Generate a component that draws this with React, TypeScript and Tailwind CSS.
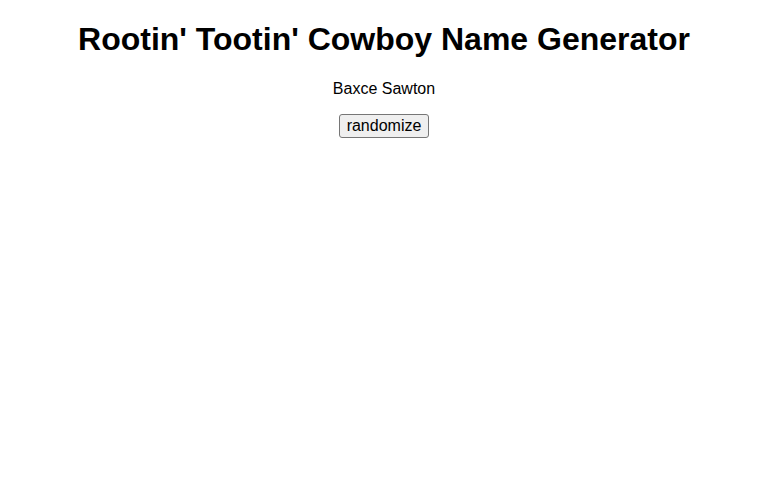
import { useState } from "react";

const FIRST = ["Baxce", "Jebediah", "Clem", "Wyatt", "Hoss", "Dusty"];
const LAST = ["Sawton", "McGraw", "Buckley", "Tumbleweed", "Colt", "Barlow"];

export default function App() {
  const [name, setName] = useState("Baxce Sawton");

  const randomize = () => {
    const f = FIRST[Math.floor(Math.random() * FIRST.length)];
    const l = LAST[Math.floor(Math.random() * LAST.length)];
    setName(`${f} ${l}`);
  };

  return (
    <div className="min-h-screen bg-white text-center text-black font-['Liberation_Sans',Arial,sans-serif]">
      <h1 className="pt-[21px] text-[32px] font-bold leading-[37px]">
        Rootin' Tootin' Cowboy Name Generator
      </h1>
      <p className="mt-[22px] text-base leading-[18px]">{name}</p>
      <button
        onClick={randomize}
        className="mt-4 rounded-[3px] border border-[#767676] bg-[#efefef] px-[7px] py-[1px] text-base leading-[20px] hover:bg-[#e5e5e5]"
      >
        randomize
      </button>
    </div>
  );
}
